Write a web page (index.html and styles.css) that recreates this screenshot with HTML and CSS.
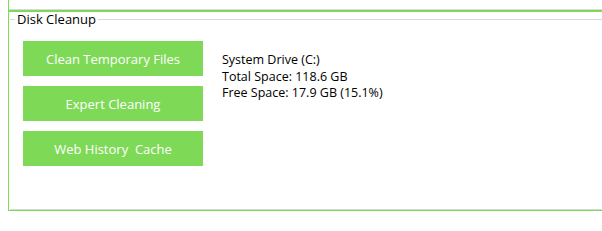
FILE: index.html
```html
<!DOCTYPE html>
<html>
<head>
  <title>Disk Cleanup</title>
  <link rel="stylesheet" href="styles.css">
</head>
<body>

  <div class="frame">
    <div class="panel">
      <div class="box">
        <fieldset class="group">
          <legend>Disk Cleanup</legend>
          <div class="group-body">
            <div class="button-col">
              <button class="clean-btn">Clean Temporary Files</button>
              <button class="clean-btn">Expert Cleaning</button>
              <button class="clean-btn">Web History&nbsp; Cache</button>
            </div>
            <div class="drive-info">
              <div>System Drive (C:)</div>
              <div>Total Space: 118.6 GB</div>
              <div>Free Space: 17.9 GB (15.1%)</div>
            </div>
          </div>
        </fieldset>
      </div>
    </div>
  </div>

</body>
</html>
```

FILE: styles.css
```css
body {
  margin: 0;
  background: #fff;
  color: #000;
  font-family: 'Open Sans', sans-serif;
  font-size: 13px;
}

.frame {
  margin-left: 8px;
  padding-top: 9px;
  border-left: 1px solid #7ed957;
  height: 202px;
}

.panel {
  border-top: 1px solid #d9d9d9;
}

.box {
  border-top: 2px solid #7ed957;
  border-bottom: 1px solid #7ed957;
  height: 198px;
}

.group {
  margin: -1px 0 0 1px;
  padding: 0 0 0 5px;
  border: 1px solid #d9d9d9;
  border-left: none;
  border-right: none;
  height: 199px;
  box-sizing: border-box;
}

.group legend {
  padding: 0 2px;
  line-height: 16px;
}

.group-body {
  display: flex;
  gap: 19px;
  margin-left: 8px;
  padding-top: 14px;
}

.button-col {
  display: flex;
  flex-direction: column;
  gap: 10px;
}

.clean-btn {
  width: 180px;
  height: 35px;
  background: #7ed957;
  border: none;
  color: #fff;
  font-family: 'Open Sans', sans-serif;
  font-size: 13px;
  cursor: pointer;
}

.drive-info {
  padding-top: 11px;
  font-size: 12.5px;
  line-height: 16.5px;
}
```
